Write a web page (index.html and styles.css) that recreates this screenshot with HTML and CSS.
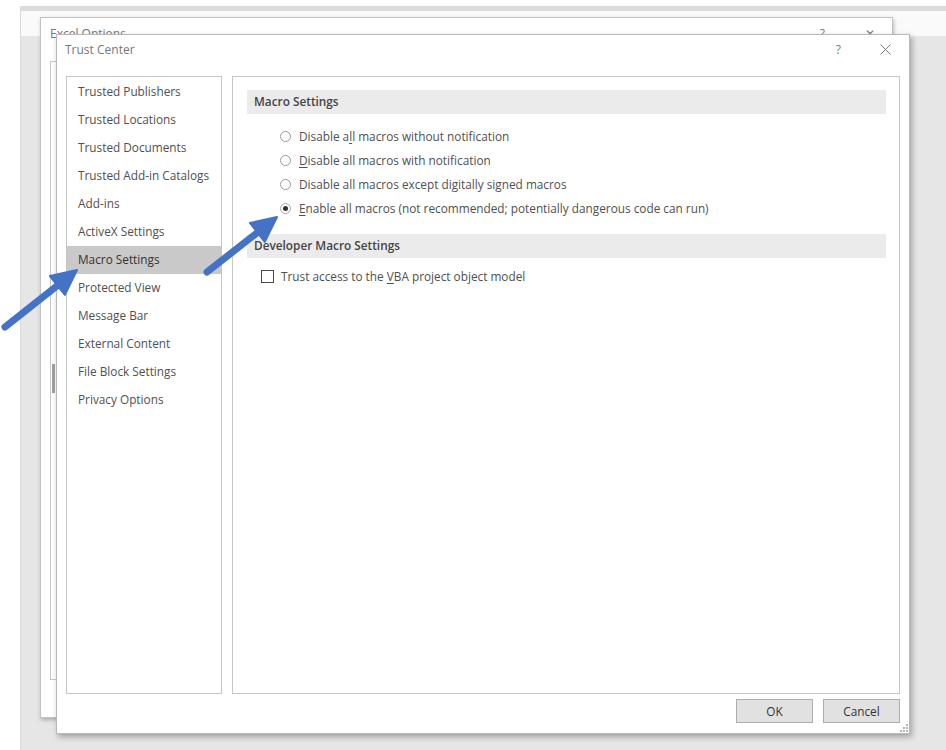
FILE: index.html
```html
<!DOCTYPE html>
<html lang="en">
<head>
    <meta charset="UTF-8">
    <meta name="viewport" content="width=device-width, initial-scale=1.0">
    <title>Trust Center</title>
    <link rel="stylesheet" href="styles.css">
</head>
<body>
    <div class="desktop">
        <!-- Excel window in the background -->
        <div class="excel">
            <div class="excel-strip"></div>
            <div class="excel-ribbon"></div>
            <div class="excel-sheet"></div>
        </div>

        <!-- Excel Options dialog, mostly covered -->
        <div class="options-dialog">
            <div class="options-title">
                <span>Excel Options</span>
                <span class="options-help">?</span>
                <span class="options-close">&#x2715;</span>
            </div>
            <div class="options-list">
                <div class="options-thumb"></div>
            </div>
        </div>

        <!-- Trust Center dialog -->
        <div class="trust-dialog">
            <div class="dialog-title">
                <span class="title-text">Trust Center</span>
                <span class="title-help">?</span>
                <svg class="title-close" width="11" height="11" viewBox="0 0 11 11">
                    <path d="M0.5 0.5 L10.5 10.5 M10.5 0.5 L0.5 10.5" stroke="#7a7a7a" stroke-width="1" fill="none"/>
                </svg>
            </div>

            <div class="dialog-body">
                <ul class="nav-list">
                    <li>Trusted Publishers</li>
                    <li>Trusted Locations</li>
                    <li>Trusted Documents</li>
                    <li>Trusted Add-in Catalogs</li>
                    <li>Add-ins</li>
                    <li>ActiveX Settings</li>
                    <li class="selected">Macro Settings</li>
                    <li>Protected View</li>
                    <li>Message Bar</li>
                    <li>External Content</li>
                    <li>File Block Settings</li>
                    <li>Privacy Options</li>
                </ul>

                <div class="settings-pane">
                    <div class="section-header">Macro Settings</div>
                    <div class="option-group">
                        <label class="option-row"><span class="radio"></span><span>Disable a<u>l</u>l macros without notification</span></label>
                        <label class="option-row"><span class="radio"></span><span><u>D</u>isable all macros with notification</span></label>
                        <label class="option-row"><span class="radio"></span><span>Disable all macros except di<u>g</u>itally signed macros</span></label>
                        <label class="option-row"><span class="radio checked"></span><span><u>E</u>nable all macros (not recommended; potentially dangerous code can run)</span></label>
                    </div>

                    <div class="section-header second">Developer Macro Settings</div>
                    <label class="check-row"><span class="checkbox"></span><span>Trust access to the <u>V</u>BA project object model</span></label>
                </div>
            </div>

            <div class="dialog-footer">
                <button class="btn">OK</button>
                <button class="btn">Cancel</button>
            </div>

            <svg class="grip" width="8" height="8" viewBox="0 0 8 8">
                <rect x="6" y="0" width="2" height="2" fill="#b5b5b5"/>
                <rect x="3" y="3" width="2" height="2" fill="#b5b5b5"/>
                <rect x="6" y="3" width="2" height="2" fill="#b5b5b5"/>
                <rect x="0" y="6" width="2" height="2" fill="#b5b5b5"/>
                <rect x="3" y="6" width="2" height="2" fill="#b5b5b5"/>
                <rect x="6" y="6" width="2" height="2" fill="#b5b5b5"/>
            </svg>
        </div>

        <!-- annotation arrows drawn over the screenshot -->
        <svg class="arrows" width="946" height="750" viewBox="0 0 946 750">
            <g fill="#4472c4" stroke="#4472c4">
                <line x1="5" y1="327" x2="60" y2="283.5" stroke-width="7" stroke-linecap="round"/>
                <polygon points="77,270 64.9,294.9 49.9,276.1" stroke-width="2" stroke-linejoin="round"/>
                <line x1="207" y1="272" x2="260" y2="230.5" stroke-width="7" stroke-linecap="round"/>
                <polygon points="277,217 264.8,241.9 249.9,223" stroke-width="2" stroke-linejoin="round"/>
            </g>
        </svg>
    </div>
</body>
</html>
```

FILE: styles.css
```css
body {
    margin: 0;
    background-color: #FFFFFF;
    font-family: "Open Sans", "Noto Sans", sans-serif;
    font-size: 11.8px;
    color: #505050;
}

.desktop {
    position: relative;
    width: 946px;
    height: 750px;
    overflow: hidden;
}

/* background Excel window */
.excel {
    position: absolute;
    left: 20px;
    top: 6px;
    right: 0;
    bottom: 0;
    display: flex;
    flex-direction: column;
    border-left: 1px solid #dadada;
}

.excel-strip {
    height: 5px;
    background-color: #dcdcdc;
}

.excel-ribbon {
    height: 25px;
    background-color: #FAFAFA;
}

.excel-sheet {
    flex: 1;
    background-color: #E6E6E6;
}

/* Excel Options dialog, the Trust Center sits on top of it */
.options-dialog {
    position: absolute;
    left: 40px;
    top: 17px;
    width: 853px;
    height: 701px;
    box-sizing: border-box;
    background-color: #FFFFFF;
    border: 1px solid #c2c2c2;
    box-shadow: 1px 2px 4px rgba(0, 0, 0, 0.25);
    padding: 0 9px;
}

.options-title {
    display: flex;
    height: 43px;
    padding-top: 8px;
    box-sizing: border-box;
    line-height: 16px;
    font-size: 12px;
    color: #777777;
}

.options-help {
    margin-left: auto;
}

.options-close {
    margin-left: 40px;
    margin-right: 8px;
}

.options-list {
    position: relative;
    width: 150px;
    height: 619px;
    box-sizing: border-box;
    border: 1px solid #c8c8c8;
}

.options-thumb {
    position: absolute;
    left: 1px;
    top: 302px;
    width: 3px;
    height: 29px;
    background-color: #a0a0a0;
}

/* Trust Center dialog */
.trust-dialog {
    position: absolute;
    left: 56px;
    top: 34px;
    width: 854px;
    height: 700px;
    box-sizing: border-box;
    background-color: #FFFFFF;
    border: 1px solid #b8b8b8;
    box-shadow: 2px 3px 6px rgba(0, 0, 0, 0.3);
    display: flex;
    flex-direction: column;
}

.dialog-title {
    display: flex;
    align-items: flex-start;
    height: 41px;
    padding: 7px 0 0 8px;
    box-sizing: border-box;
    line-height: 16px;
    font-size: 12px;
    color: #777777;
}

.title-help {
    margin-left: auto;
}

.title-close {
    margin: 2px 18px 0 39px;
}

.dialog-body {
    display: flex;
    gap: 10px;
    height: 618px;
    padding: 0 9px;
}

.nav-list {
    list-style: none;
    margin: 0;
    padding: 1px 0 0 0;
    width: 156px;
    box-sizing: border-box;
    border: 1px solid #c6c6c6;
}

.nav-list li {
    height: 28px;
    line-height: 27px;
    padding-left: 11px;
    white-space: nowrap;
}

.nav-list li.selected {
    background-color: #c9c9c9;
    color: #333333;
}

.settings-pane {
    flex: 1;
    border: 1px solid #c6c6c6;
    padding: 13px 13px 0 14px;
}

.section-header {
    height: 24px;
    line-height: 23px;
    padding-left: 7px;
    background-color: #EBEBEB;
    font-weight: 600;
    color: #454545;
}

.section-header.second {
    margin-top: 14px;
}

.option-group {
    margin-top: 10px;
    padding-left: 33px;
}

.option-row {
    display: flex;
    align-items: center;
    height: 24px;
    gap: 8px;
    white-space: nowrap;
}

.radio {
    width: 11px;
    height: 11px;
    box-sizing: border-box;
    border: 1px solid #9a9a9a;
    border-radius: 50%;
    background-color: #FFFFFF;
    position: relative;
}

.radio.checked {
    border-color: #a8a8a8;
}

.radio.checked::after {
    content: "";
    position: absolute;
    left: 2px;
    top: 2px;
    width: 5px;
    height: 5px;
    border-radius: 50%;
    background-color: #333333;
}

.check-row {
    display: flex;
    align-items: center;
    height: 24px;
    margin-top: 6px;
    padding-left: 14px;
    gap: 7px;
}

.checkbox {
    width: 13px;
    height: 13px;
    box-sizing: border-box;
    border: 1px solid #4a4a4a;
    background-color: #FFFFFF;
}

u {
    text-underline-offset: 2px;
}

.dialog-footer {
    display: flex;
    justify-content: flex-end;
    gap: 10px;
    padding: 5px 9px 0 0;
}

.btn {
    width: 77px;
    height: 24px;
    font-family: "Open Sans", "Noto Sans", sans-serif;
    font-size: 11.8px;
    color: #333333;
    background-color: #E1E1E1;
    border: 1px solid #adadad;
    padding: 0;
}

.grip {
    position: absolute;
    right: 1px;
    bottom: 1px;
}

.arrows {
    position: absolute;
    left: 0;
    top: 0;
    pointer-events: none;
}
```
